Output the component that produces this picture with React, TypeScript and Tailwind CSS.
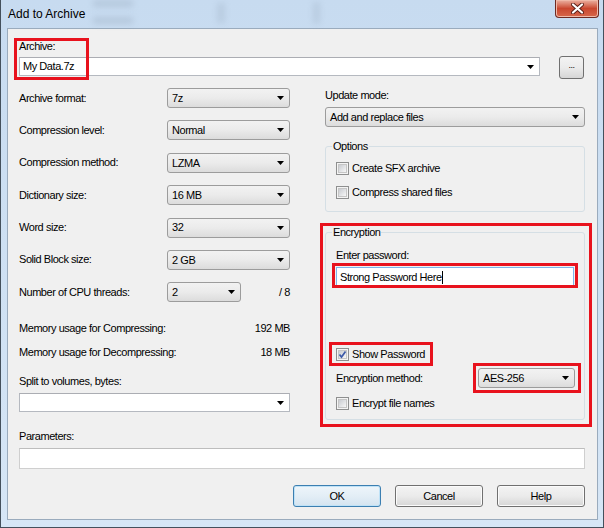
import type { ReactNode } from 'react';

function Arrow() {
  return (
    <svg width="7" height="4" viewBox="0 0 7 4" className="shrink-0">
      <path d="M0 0h7L3.5 4z" fill="#000" />
    </svg>
  );
}

function Select({ value, className = '' }: { value: string; className?: string }) {
  return (
    <div
      className={`flex h-[20px] items-center justify-between rounded-[3px] border border-[#9c9c9c] bg-gradient-to-b from-[#f2f2f2] via-[#ebebeb] to-[#dcdcdc] pl-[4px] pr-[5px] ${className}`}
    >
      <span>{value}</span>
      <Arrow />
    </div>
  );
}

function Combo({ value = '', className = '' }: { value?: string; className?: string }) {
  return (
    <div
      className={`flex h-[19px] items-center justify-between border border-[#b5b9c0] border-t-[#abadb3] bg-white pl-[3px] pr-[5px] ${className}`}
    >
      <span>{value}</span>
      <Arrow />
    </div>
  );
}

function Check({ checked = false }: { checked?: boolean }) {
  return (
    <span className="relative flex h-[13px] w-[13px] shrink-0 items-center justify-center border border-[#8e8f8f] bg-[#f4f4f4]">
      <span className="h-[9px] w-[9px] border border-[#c6c6c6] bg-gradient-to-br from-[#c9ccd1] to-[#f7f7f7]" />
      {checked && (
        <svg width="11" height="11" viewBox="0 0 11 11" className="absolute left-[0px] top-[0px]">
          <path d="M2.5 5.5 L4.5 8 L8.5 2.5" stroke="#3c5aa8" strokeWidth="1.7" fill="none" />
        </svg>
      )}
    </span>
  );
}

function CheckRow({ label, checked }: { label: string; checked?: boolean }) {
  return (
    <div className="flex h-[13px] items-center gap-[3px]">
      <Check checked={checked} />
      <span className="leading-[13px]">{label}</span>
    </div>
  );
}

function Row({ label, children }: { label: string; children: ReactNode }) {
  return (
    <div className="flex h-[20px] items-center justify-between">
      <span className="leading-[13px]">{label}</span>
      {children}
    </div>
  );
}

function Button({ label, focused = false }: { label: string; focused?: boolean }) {
  return (
    <div
      className={`flex h-[22px] w-[88px] items-center justify-center rounded-[3px] border bg-gradient-to-b ${
        focused
          ? 'border-[#3c7fb1] from-[#eef5fa] via-[#e3eef6] to-[#d4e4f0] shadow-[inset_0_0_0_1px_#bfe2f7]'
          : 'border-[#707070] from-[#f3f3f3] via-[#ebebeb] to-[#d6d6d6] shadow-[inset_0_0_0_1px_#fbfbfb]'
      }`}
    >
      {label}
    </div>
  );
}

function RedBox({ className }: { className: string }) {
  return <div className={`pointer-events-none absolute border-[3px] border-[#e8121d] ${className}`} />;
}

export default function App() {
  return (
    <div className="relative h-[528px] w-[604px] overflow-hidden border-x border-b border-[#44505c] bg-gradient-to-b from-[#c7dbf0] to-[#d6e6f6] font-['Liberation_Sans'] text-[11px] tracking-[-0.45px] text-black">
      {/* blurred stuff behind the glass */}
      <div className="absolute left-[92px] top-[0px] h-[7px] w-[40px] bg-[#7f90a3] opacity-25 blur-[3px]" />
      <div className="absolute left-[92px] top-[17px] h-[7px] w-[40px] bg-[#7f90a3] opacity-25 blur-[3px]" />
      <div className="absolute left-[216px] top-[3px] h-[20px] w-[8px] bg-[#7f90a3] opacity-20 blur-[3px]" />
      <div className="absolute left-[312px] top-[2px] h-[22px] w-[7px] bg-[#7f90a3] opacity-20 blur-[3px]" />

      {/* title bar */}
      <div className="relative flex h-[28px]">
        <span className="ml-[7px] self-center text-[12px] tracking-normal">Add to Archive</span>
        <div className="ml-auto mr-[4px] flex h-[18px] w-[44px] items-center justify-center rounded-b-[4px] border border-t-0 border-[#6e2a22] bg-gradient-to-b from-[#eab1a2] via-[#c9472f] to-[#d7664a] shadow-[inset_0_0_0_1px_#f0b9a8]">
          <svg width="13" height="11" viewBox="0 0 13 11">
            <path d="M2 1.5 L11 9.5 M11 1.5 L2 9.5" stroke="#5a1f17" strokeWidth="4" strokeLinecap="round" />
            <path d="M2 1.5 L11 9.5 M11 1.5 L2 9.5" stroke="#fff" strokeWidth="2.2" strokeLinecap="round" />
          </svg>
        </div>
      </div>

      {/* client area */}
      <div className="ml-[6px] flex h-[492px] w-[591px] flex-col border border-[#9aabbd] bg-[#f0f0f0] pl-[11px] pr-[12px] pt-[11px]">
        <span className="h-[13px] leading-[13px]">Archive:</span>
        <div className="mt-[3px] flex items-start">
          <Combo value="My Data.7z" className="mt-[1px] w-[521px]" />
          <div className="ml-[19px] flex h-[23px] w-[25px] items-center justify-center rounded-[3px] border border-[#707070] bg-gradient-to-b from-[#f3f3f3] via-[#ebebeb] to-[#d6d6d6] pb-[3px] text-[9px]">
            ...
          </div>
        </div>

        <div className="mt-[9px] flex gap-[35px]">
          {/* left column */}
          <div className="flex w-[271px] flex-col">
            <div className="flex flex-col gap-[12.4px]">
              <Row label="Archive format:">
                <Select value="7z" className="w-[123px]" />
              </Row>
              <Row label="Compression level:">
                <Select value="Normal" className="w-[123px]" />
              </Row>
              <Row label="Compression method:">
                <Select value="LZMA" className="w-[123px]" />
              </Row>
              <Row label="Dictionary size:">
                <Select value="16 MB" className="w-[123px]" />
              </Row>
              <Row label="Word size:">
                <Select value="32" className="w-[123px]" />
              </Row>
              <Row label="Solid Block size:">
                <Select value="2 GB" className="w-[123px]" />
              </Row>
              <div className="flex h-[20px] items-center">
                <span className="w-[148px] leading-[13px]">Number of CPU threads:</span>
                <Select value="2" className="w-[74px]" />
                <span className="flex-1 text-right leading-[13px]">/ 8</span>
              </div>
            </div>
            <div className="mt-[20px] flex h-[13px] justify-between leading-[13px]">
              <span>Memory usage for Compressing:</span>
              <span>192 MB</span>
            </div>
            <div className="mt-[11px] flex h-[13px] justify-between leading-[13px]">
              <span>Memory usage for Decompressing:</span>
              <span>18 MB</span>
            </div>
            <span className="mt-[16px] h-[13px] leading-[13px]">Split to volumes, bytes:</span>
            <Combo className="mt-[5px] w-full" />
          </div>

          {/* right column */}
          <div className="flex w-[260px] flex-col">
            <span className="mt-[1px] h-[13px] leading-[13px]">Update mode:</span>
            <Select value="Add and replace files" className="mt-[5px] w-full" />

            <fieldset className="mt-[13px] rounded-[3px] border border-[#d5dfe5] pb-[12px] pl-[10px] pr-[9px]">
              <legend className="ml-[-4px] px-[1px] leading-[13px]">Options</legend>
              <div className="mt-[9px] flex flex-col gap-[11px]">
                <CheckRow label="Create SFX archive" />
                <CheckRow label="Compress shared files" />
              </div>
            </fieldset>

            <fieldset className="mt-[14px] rounded-[3px] border border-[#d5dfe5] pb-[9px] pl-[10px] pr-[9px]">
              <legend className="ml-[-4px] px-[1px] leading-[13px]">Encryption</legend>
              <div className="mt-[10px] flex flex-col">
                <span className="h-[13px] leading-[13px]">Enter password:</span>
                <div className="mt-[5px] flex h-[20px] w-[238px] items-center border border-[#7eb4ea] bg-white pl-[3px]">
                  <span>Strong Password Here</span>
                  <span className="h-[13px] w-[1px] bg-black" />
                </div>
                <div className="mt-[61px]">
                  <CheckRow label="Show Password" checked />
                </div>
                <div className="mt-[7px] flex h-[20px] items-center justify-between">
                  <span className="leading-[13px]">Encryption method:</span>
                  <Select value="AES-256" className="w-[97px]" />
                </div>
                <div className="mt-[9px]">
                  <CheckRow label="Encrypt file names" />
                </div>
              </div>
            </fieldset>
          </div>
        </div>

        <span className="mt-[10px] h-[13px] leading-[13px]">Parameters:</span>
        <div className="mt-[5px] h-[21px] w-full border border-[#cfcfcf] border-t-[#bdbdbd] bg-white" />

        <div className="mt-[16px] flex justify-end gap-[14px]">
          <Button label="OK" focused />
          <Button label="Cancel" />
          <Button label="Help" />
        </div>
      </div>

      {/* red annotation boxes */}
      <RedBox className="left-[13px] top-[38px] h-[42px] w-[75px]" />
      <RedBox className="left-[319px] top-[223px] h-[204px] w-[272px]" />
      <RedBox className="left-[331px] top-[263px] h-[25px] w-[246px]" />
      <RedBox className="left-[328px] top-[342px] h-[24px] w-[104px]" />
      <RedBox className="left-[472px] top-[363px] h-[30px] w-[108px]" />
    </div>
  );
}
